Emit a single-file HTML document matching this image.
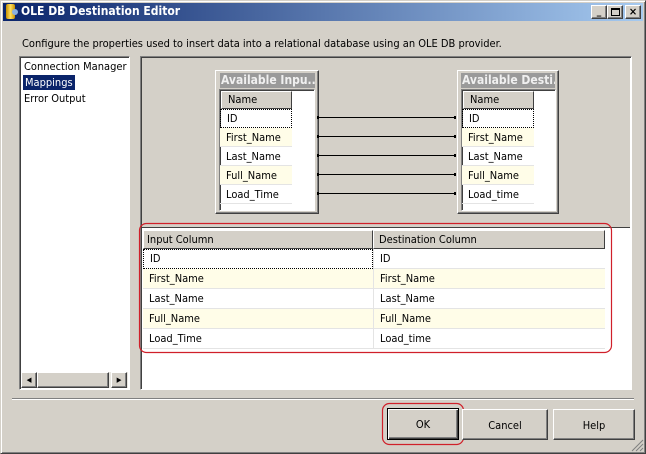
<!DOCTYPE html>
<html><head><style>
*{margin:0;padding:0;box-sizing:border-box}
body{width:646px;height:454px;background:#d4d0c8;font-family:Tahoma,"DejaVu Sans Condensed","Liberation Sans",sans-serif;font-size:11px;color:#000;position:relative;overflow:hidden}
.a{position:absolute}
.t{white-space:nowrap}
.sunk{border:1px solid;border-color:#808080 #fff #fff #808080;box-shadow:inset 1px 1px 0 #404040}
.btn{position:absolute;background:#d4d0c8;border:1px solid;border-color:#fff #404040 #404040 #fff;box-shadow:inset -1px -1px 0 #808080;text-align:center;line-height:31px}
.row{position:absolute;left:0;height:19px;line-height:19px;padding-left:6px;border-bottom:1px solid #e4e4e4}
.y{background:#fffde8}
</style></head><body>
<div class="a" style="left:0;top:0;width:646px;height:454px;border:1px solid;border-color:#d4d0c8 #404040 #404040 #d4d0c8;box-shadow:inset 1px 1px 0 #fff,inset -1px -1px 0 #808080"></div>
<div class="a" style="left:3px;top:3px;width:640px;height:18px;background:linear-gradient(90deg,#0a246a,#a6caf0)"></div>
<div class="a" style="left:6px;top:4px;width:9px;height:15px;background:linear-gradient(90deg,#c89000,#ffe060,#c89000);border-radius:2px"></div>
<div class="a" style="left:12px;top:9px;width:6px;height:6px;background:#8ab0e0;border-radius:50%"></div>
<div class="a t" style="left:21px;top:4px;color:#fff;font-weight:bold;font-size:12px;line-height:15px">OLE DB Destination Editor</div>
<div class="btn" style="left:591px;top:5px;width:16px;height:14px;line-height:12px;font-weight:bold;font-size:10px">_</div>
<div class="btn" style="left:607px;top:5px;width:16px;height:14px"><div class="a" style="left:3px;top:2px;width:9px;height:8px;border:1px solid #000;border-top-width:2px"></div></div>
<div class="btn" style="left:625px;top:5px;width:16px;height:14px;line-height:12px;font-weight:bold;font-size:11px">×</div>
<div class="a t" style="left:22px;top:37px">Configure the properties used to insert data into a relational database using an OLE DB provider.</div>

<div class="a sunk" style="left:19px;top:56px;width:111px;height:334px;background:#fff"></div>
<div class="a t" style="left:24px;top:59px;line-height:16px">Connection Manager</div>
<div class="a t" style="left:24px;top:75px;line-height:15px;background:#0a246a;color:#fff;padding:0 2px;margin-left:-1px">Mappings</div>
<div class="a t" style="left:24px;top:91px;line-height:16px">Error Output</div>
<div class="a" style="left:21px;top:372px;width:107px;height:16px;background:#e8e6e0"></div>
<div class="btn" style="left:21px;top:372px;width:16px;height:16px;line-height:14px;font-size:7px">◀</div>
<div class="btn" style="left:37px;top:372px;width:72px;height:16px"></div>
<div class="btn" style="left:111px;top:372px;width:16px;height:16px;line-height:14px;font-size:7px">▶</div>

<div class="a sunk" style="left:140px;top:56px;width:492px;height:334px;background:#fff"></div>
<div class="a" style="left:142px;top:58px;width:488px;height:165px;background:#d4d0c8"></div>
<div class="a" style="left:142px;top:223px;width:488px;height:5px;background:#d4d0c8;border-bottom:1px solid #404040"></div>

<div class="a" style="left:215px;top:70px;width:104px;height:144px;background:#d4d0c8;border:1px solid;border-color:#fff #404040 #404040 #fff;box-shadow:inset -1px -1px 0 #808080"></div>
<div class="a t" style="left:220px;top:73px;color:#f0f0f0;background:#9a9a9a;width:95px;font-weight:bold;font-size:12px;line-height:15px;padding-left:1px;overflow:hidden">Available Inpu...</div>
<div class="a sunk" style="left:219px;top:89px;width:96px;height:122px;background:#fff">
 <div class="a" style="left:1px;top:1px;width:71px;height:18px;background:#d4d0c8;border:1px solid;border-color:#fff #404040 #404040 #fff;padding-left:6px;line-height:16px">Name</div>
 <div class="row" style="top:19px;width:72px;border:1px dotted #000;line-height:17px">ID</div>
 <div class="row y" style="top:38px;width:72px">First_Name</div>
 <div class="row" style="top:57px;width:72px">Last_Name</div>
 <div class="row y" style="top:76px;width:72px">Full_Name</div>
 <div class="row" style="top:95px;width:72px">Load_Time</div>
</div>
<div class="a" style="left:457px;top:70px;width:102px;height:144px;background:#d4d0c8;border:1px solid;border-color:#fff #404040 #404040 #fff;box-shadow:inset -1px -1px 0 #808080"></div>
<div class="a t" style="left:461px;top:73px;color:#f0f0f0;background:#9a9a9a;width:94px;font-weight:bold;font-size:12px;line-height:15px;padding-left:1px;overflow:hidden">Available Desti...</div>
<div class="a sunk" style="left:461px;top:89px;width:95px;height:122px;background:#fff">
 <div class="a" style="left:1px;top:1px;width:71px;height:18px;background:#d4d0c8;border:1px solid;border-color:#fff #404040 #404040 #fff;padding-left:6px;line-height:16px">Name</div>
 <div class="row" style="top:19px;width:72px;border:1px dotted #000;line-height:17px">ID</div>
 <div class="row y" style="top:38px;width:72px">First_Name</div>
 <div class="row" style="top:57px;width:72px">Last_Name</div>
 <div class="row y" style="top:76px;width:72px">Full_Name</div>
 <div class="row" style="top:95px;width:72px">Load_time</div>
</div>
<svg class="a" style="left:0;top:0" width="646" height="454">
<g stroke="#000" stroke-width="1">
<line x1="318" y1="117.5" x2="456" y2="117.5"/><line x1="318" y1="136.5" x2="456" y2="136.5"/><line x1="318" y1="155.5" x2="456" y2="155.5"/><line x1="318" y1="174.5" x2="456" y2="174.5"/><line x1="318" y1="193.5" x2="456" y2="193.5"/>
</g>
<g fill="#000"><rect x="317" y="116" width="2" height="3"/><rect x="317" y="135" width="2" height="3"/><rect x="317" y="154" width="2" height="3"/><rect x="317" y="173" width="2" height="3"/><rect x="317" y="192" width="2" height="3"/>
<rect x="454" y="116" width="2" height="3"/><rect x="454" y="135" width="2" height="3"/><rect x="454" y="154" width="2" height="3"/><rect x="454" y="173" width="2" height="3"/><rect x="454" y="192" width="2" height="3"/></g>
<rect x="139.5" y="223.5" width="472" height="129" rx="7" fill="none" stroke="#d0202a" stroke-width="1.2"/>
<rect x="382.5" y="403.5" width="81" height="41" rx="7" fill="none" stroke="#d0202a" stroke-width="1.2"/>
</svg>

<div class="a" style="left:143px;top:230px;width:462px;height:120px;background:#fff">
 <div class="a" style="left:0;top:0;width:230px;height:19px;background:#d4d0c8;border:1px solid;border-color:#fff #404040 #404040 #fff;padding-left:3px;line-height:18px">Input Column</div>
 <div class="a" style="left:230px;top:0;width:232px;height:19px;background:#d4d0c8;border:1px solid;border-color:#fff #404040 #404040 #fff;padding-left:5px;line-height:18px">Destination Column</div>
 <div class="row" style="top:19px;width:230px;height:20px;line-height:18px;border:1px dotted #000">ID</div>
 <div class="row" style="left:230px;top:19px;width:232px;height:20px;line-height:20px;border-left:1px solid #e4e4e4">ID</div>
 <div class="row y" style="top:39px;width:230px;height:20px;line-height:20px">First_Name</div>
 <div class="row y" style="left:230px;top:39px;width:232px;height:20px;line-height:20px;border-left:1px solid #e4e4e4">First_Name</div>
 <div class="row" style="top:59px;width:230px;height:20px;line-height:20px">Last_Name</div>
 <div class="row" style="left:230px;top:59px;width:232px;height:20px;line-height:20px;border-left:1px solid #e4e4e4">Last_Name</div>
 <div class="row y" style="top:79px;width:230px;height:20px;line-height:20px">Full_Name</div>
 <div class="row y" style="left:230px;top:79px;width:232px;height:20px;line-height:20px;border-left:1px solid #e4e4e4">Full_Name</div>
 <div class="row" style="top:99px;width:230px;height:20px;line-height:20px">Load_Time</div>
 <div class="row" style="left:230px;top:99px;width:232px;height:20px;line-height:20px;border-left:1px solid #e4e4e4">Load_time</div>
</div>

<div class="a" style="left:12px;top:398px;width:622px;height:2px;border-top:1px solid #808080;border-bottom:1px solid #fff"></div>
<div class="btn" style="left:387px;top:408px;width:72px;height:32px;border:1px solid #000;box-shadow:inset 1px 1px 0 #fff,inset -1px -1px 0 #404040,inset -2px -2px 0 #808080">OK</div>
<div class="btn" style="left:462px;top:409px;width:86px;height:31px">Cancel</div>
<div class="btn" style="left:553px;top:409px;width:82px;height:31px">Help</div>
<svg class="a" style="left:630px;top:438px" width="14" height="14"><g stroke="#808080"><line x1="13" y1="2" x2="2" y2="13"/><line x1="13" y1="6" x2="6" y2="13"/><line x1="13" y1="10" x2="10" y2="13"/></g></svg>
</body></html>
